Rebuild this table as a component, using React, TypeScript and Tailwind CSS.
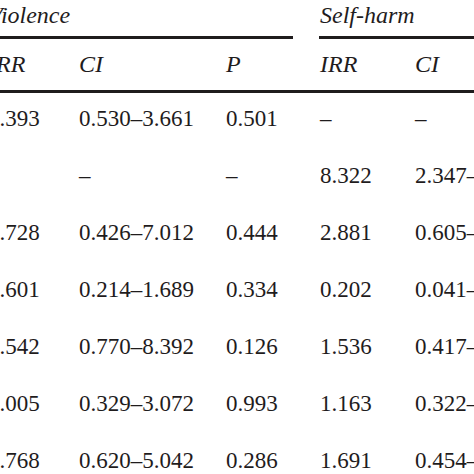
import React from 'react';

const cols = ['w-[91px]', 'w-[147px]', 'w-[94px]', 'w-[95px]', 'w-[170px]'];

const rows: string[][] = [
    ['1.393', '0.530–3.661', '0.501', '–', '–'],
    ['–', '–', '–', '8.322', '2.347–29.51'],
    ['1.728', '0.426–7.012', '0.444', '2.881', '0.605–13.72'],
    ['0.601', '0.214–1.689', '0.334', '0.202', '0.041–0.995'],
    ['2.542', '0.770–8.392', '0.126', '1.536', '0.417–5.654'],
    ['1.005', '0.329–3.072', '0.993', '1.163', '0.322–4.201'],
    ['1.768', '0.620–5.042', '0.286', '1.691', '0.454–6.298'],
];

const Cell: React.FC<{ w: string; children: React.ReactNode }> = ({ w, children }) => (
    <div className={`${w} shrink-0 whitespace-nowrap`}>{children}</div>
);

export default function App() {
    return (
        <div
            className="w-[474px] h-[474px] overflow-hidden bg-white text-[#1f1c1d] text-[23px]"
            style={{ fontFamily: '"Liberation Serif", "Times New Roman", serif' }}
        >
            <div className="ml-[-12px] w-[620px]">
                {/* group headers */}
                <div className="flex text-[24px]">
                    <div className="w-[332px] shrink-0">
                        <div className="h-[36px] leading-[31px] italic">Violence</div>
                        <div className="mr-[27px] h-[3px] bg-[#1f1c1d]"></div>
                    </div>
                    <div className="grow">
                        <div className="h-[36px] leading-[31px] italic">Self-harm</div>
                        <div className="ml-[-1px] h-[3px] bg-[#1f1c1d]"></div>
                    </div>
                </div>

                {/* column headers */}
                <div className="flex h-[49px] pt-[2px] leading-[47px] text-[24px] italic border-b-[3px] border-[#1f1c1d] box-content">
                    <Cell w={cols[0]}>IRR</Cell>
                    <Cell w={cols[1]}>CI</Cell>
                    <Cell w={cols[2]}>P</Cell>
                    <Cell w={cols[3]}>IRR</Cell>
                    <Cell w={cols[4]}>CI</Cell>
                </div>

                {/* data */}
                <div className="-mt-[3px]">
                    {rows.map((r, i) => (
                        <div key={i} className="flex h-[57px] leading-[57px]">
                            {r.map((v, j) => (
                                <Cell key={j} w={cols[j]}>{v}</Cell>
                            ))}
                        </div>
                    ))}
                </div>
            </div>
        </div>
    );
}
